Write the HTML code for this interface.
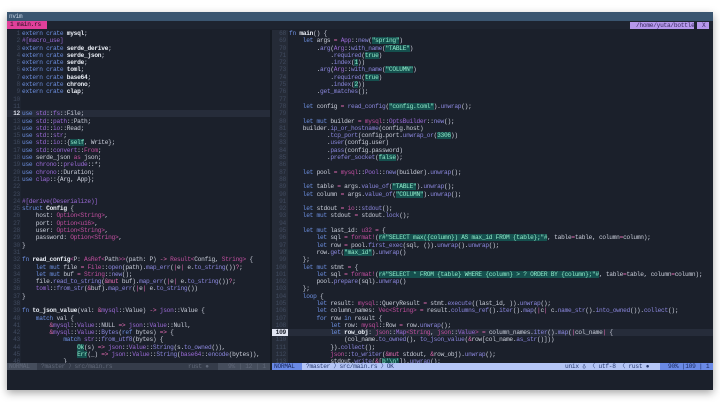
<!DOCTYPE html>
<html><head><meta charset="utf-8"><style>
*{margin:0;padding:0;box-sizing:border-box}
html,body{width:720px;height:402px;background:#fff;overflow:hidden}
#win{position:absolute;left:7px;top:12px;width:706px;height:378px;background:#1b202b;box-shadow:0 3px 8px rgba(0,0,0,.35);overflow:hidden}
#title{position:absolute;left:0;top:0;width:706px;height:9px;background:#3a5570;color:#c8d4e4;font:6px "Liberation Mono",monospace;line-height:9px;padding-left:2px}
#tabs{position:absolute;left:0;top:9px;width:706px;height:8px;background:#1e2430}
.m{font-family:"Liberation Mono",monospace;font-size:6.2px;letter-spacing:-0.27px;white-space:pre;line-height:7.29px}
#tab1{position:absolute;left:0;top:0;height:8px;width:40px;background:#e0409a;color:#2a1020;line-height:8px;padding-left:3px}
#cwd{position:absolute;left:623px;top:1px;height:7px;width:64px;background:#b698ec;color:#3a2a60;line-height:7px;padding-left:6px}
#cx{position:absolute;left:690px;top:1px;height:7px;width:12px;background:#b698ec;color:#3a2a60;line-height:7px;padding-left:5px}
.pane{position:absolute;top:18px}
#lg{left:0;width:14px;height:333px;background:#1e2430}
#sep{position:absolute;left:263px;top:18px;width:2px;height:333px;background:#151a22}
#rg{left:265px;width:16px;height:333px;background:#252b37}
.ln{position:absolute;top:18px;color:#404a5e;text-align:right}
.code{position:absolute;top:18px;color:#c8ccd8;overflow:hidden;height:333px}
.k{color:#6d8fe0}.t{color:#c04e9e}.n{color:#9a6ad6}.b{color:#e8ecf4;font-weight:bold}.s{background:#15504e;color:#8fe8c8}.f{color:#8a86dc}.o{color:#e06ab0}
#st1{position:absolute;left:0;top:351px;width:263px;height:7px;background:#353c4a;color:#606878;line-height:7px;overflow:hidden}
#st2{position:absolute;left:265px;top:351px;width:441px;height:7px;background:#b5c6f6;color:#283a70;line-height:7px;overflow:hidden}
.nm1{position:absolute;left:0;top:0;width:30px;height:7px;background:#454d5c;padding-left:2px}
.nm2{position:absolute;left:0;top:0;width:30px;height:7px;background:#6a8ae6;padding-left:2px;color:#1a2a60}
</style></head><body>
<div id="win">
<div id="title" class="m">nvim</div>
<div id="tabs"><div id="tab1" class="m">1 main.rs</div><div id="cwd" class="m">/home/yuta/bottle</div><div id="cx" class="m">X</div></div>
<div id="lg" class="pane"></div>
<div style="position:absolute;left:0;top:98.2px;width:263px;height:7.3px;background:#262c3a"></div>
<div id="sep"></div>
<div id="rg" class="pane"></div>
<div style="position:absolute;left:265px;top:316.9px;width:16px;height:7.3px;background:#e0e4f0"></div>
<div style="position:absolute;left:281px;top:316.9px;width:425px;height:7.3px;background:#262c3a"></div>
<div class="ln m" style="left:0;width:13px">1
2
3
4
5
6
7
8
9
10
11
<span style="color:#d8dce8;font-weight:bold">12</span>
13
14
15
16
17
18
19
20
21
22
23
24
25
26
27
28
29
30
31
32
33
34
35
36
37
38
39
40
41
42
43
44
45
46</div>
<div class="code m" style="left:15px;width:248px"><span class="k">extern crate</span> <span class="b">mysql</span>;
<span class="n">#[macro_use]</span>
<span class="k">extern crate</span> <span class="b">serde_derive</span>;
<span class="k">extern crate</span> <span class="b">serde_json</span>;
<span class="k">extern crate</span> <span class="b">serde</span>;
<span class="k">extern crate</span> <span class="b">toml</span>;
<span class="k">extern crate</span> <span class="b">base64</span>;
<span class="k">extern crate</span> <span class="b">chrono</span>;
<span class="k">extern crate</span> <span class="b">clap</span>;


<span class="k">use</span> <span class="n">std</span>::<span class="n">fs</span>::File;
<span class="k">use</span> <span class="n">std</span>::<span class="n">path</span>::Path;
<span class="k">use</span> <span class="n">std</span>::<span class="n">io</span>::Read;
<span class="k">use</span> <span class="n">std</span>::<span class="n">str</span>;
<span class="k">use</span> <span class="n">std</span>::<span class="n">io</span>::{<span class="s">self</span>, Write};
<span class="k">use</span> <span class="n">std</span>::<span class="n">convert</span>::<span class="t">From</span>;
<span class="k">use</span> serde_json <span class="t">as</span> json;
<span class="k">use</span> <span class="n">chrono</span>::<span class="n">prelude</span>::*;
<span class="k">use</span> <span class="n">chrono</span>::Duration;
<span class="k">use</span> <span class="n">clap</span>::{Arg, App};


<span class="n">#[derive(Deserialize)]</span>
<span class="k">struct</span> <span class="b">Config</span> {
    host: <span class="t">Option&lt;String&gt;</span>,
    port: <span class="t">Option&lt;u16&gt;</span>,
    user: <span class="t">Option&lt;String&gt;</span>,
    password: <span class="t">Option&lt;String&gt;</span>,
}

<span class="k">fn</span> <span class="b">read_config</span><span class="t">&lt;</span>P: <span class="t">AsRef&lt;</span>Path<span class="t">&gt;&gt;</span>(path: P) <span class="o">-&gt;</span> <span class="t">Result&lt;</span>Config, <span class="t">String&gt;</span> {
    <span class="k">let mut</span> file <span class="o">=</span> <span class="t">File</span>::<span class="f">open</span>(path).<span class="f">map_err</span>(<span class="o">|</span>e<span class="o">|</span> e.<span class="f">to_string</span>())<span class="o">?</span>;
    <span class="k">let mut</span> buf <span class="o">=</span> <span class="t">String</span>::<span class="f">new</span>();
    file.<span class="f">read_to_string</span>(<span class="o">&amp;mut</span> buf).<span class="f">map_err</span>(<span class="o">|</span>e<span class="o">|</span> e.<span class="f">to_string</span>())<span class="o">?</span>;
    <span class="n">toml</span>::<span class="f">from_str</span>(<span class="o">&amp;</span>buf).<span class="f">map_err</span>(<span class="o">|</span>e<span class="o">|</span> e.<span class="f">to_string</span>())
}

<span class="k">fn</span> <span class="b">to_json_value</span>(val: <span class="o">&amp;</span><span class="n">mysql</span>::Value) <span class="o">-&gt;</span> <span class="n">json</span>::Value {
    <span class="k">match</span> val {
        <span class="o">&amp;</span><span class="n">mysql</span>::<span class="n">Value</span>::NULL <span class="o">=&gt;</span> <span class="n">json</span>::<span class="n">Value</span>::Null,
        <span class="o">&amp;</span><span class="n">mysql</span>::<span class="n">Value</span>::<span class="f">Bytes</span>(<span class="k">ref</span> bytes) <span class="o">=&gt;</span> {
            <span class="k">match</span> <span class="n">str</span>::<span class="f">from_utf8</span>(bytes) {
                <span class="s">Ok</span>(s) <span class="o">=&gt;</span> <span class="n">json</span>::<span class="n">Value</span>::<span class="f">String</span>(s.<span class="f">to_owned</span>()),
                <span class="s">Err</span>(_) <span class="o">=&gt;</span> <span class="n">json</span>::<span class="n">Value</span>::<span class="f">String</span>(<span class="n">base64</span>::<span class="f">encode</span>(bytes)),
            }</div>
<div class="ln m" style="left:265px;width:14px">68
69
70
71
72
73
74
75
76
77
78
79
80
81
82
83
84
85
86
87
88
89
90
91
92
93
94
95
96
97
98
99
100
101
102
103
104
105
106
107
108
<span style="color:#1b202b;font-weight:bold">109</span>
110
111
112
113</div>
<div class="code m" style="left:282px;width:424px"><span class="k">fn</span> <span class="b">main</span>() {
    <span class="k">let</span> args <span class="o">=</span> <span class="n">App</span>::<span class="f">new</span>(<span class="s">"spring"</span>)
        .<span class="f">arg</span>(<span class="n">Arg</span>::<span class="f">with_name</span>(<span class="s">"TABLE"</span>)
            .<span class="f">required</span>(<span class="s">true</span>)
            .<span class="f">index</span>(<span class="s">1</span>))
        .<span class="f">arg</span>(<span class="n">Arg</span>::<span class="f">with_name</span>(<span class="s">"COLUMN"</span>)
            .<span class="f">required</span>(<span class="s">true</span>)
            .<span class="f">index</span>(<span class="s">2</span>))
        .<span class="f">get_matches</span>();

    <span class="k">let</span> config <span class="o">=</span> <span class="f">read_config</span>(<span class="s">"config.toml"</span>).<span class="f">unwrap</span>();

    <span class="k">let mut</span> builder <span class="o">=</span> <span class="t">mysql</span>::<span class="n">OptsBuilder</span>::<span class="f">new</span>();
    builder.<span class="f">ip_or_hostname</span>(config.host)
           .<span class="f">tcp_port</span>(config.port.<span class="f">unwrap_or</span>(<span class="s">3306</span>))
           .<span class="f">user</span>(config.user)
           .<span class="f">pass</span>(config.password)
           .<span class="f">prefer_socket</span>(<span class="s">false</span>);

    <span class="k">let</span> pool <span class="o">=</span> <span class="t">mysql</span>::<span class="n">Pool</span>::<span class="f">new</span>(builder).<span class="f">unwrap</span>();

    <span class="k">let</span> table <span class="o">=</span> args.<span class="f">value_of</span>(<span class="s">"TABLE"</span>).<span class="f">unwrap</span>();
    <span class="k">let</span> column <span class="o">=</span> args.<span class="f">value_of</span>(<span class="s">"COLUMN"</span>).<span class="f">unwrap</span>();

    <span class="k">let</span> stdout <span class="o">=</span> <span class="t">io</span>::<span class="f">stdout</span>();
    <span class="k">let mut</span> stdout <span class="o">=</span> stdout.<span class="f">lock</span>();

    <span class="k">let mut</span> last_id: <span class="t">u32</span> <span class="o">=</span> {
        <span class="k">let</span> sql <span class="o">=</span> <span class="t">format!</span>(<span class="s">r#"SELECT max({column}) AS max_id FROM {table};"#</span>, table<span class="o">=</span>table, column<span class="o">=</span>column);
        <span class="k">let</span> row <span class="o">=</span> pool.<span class="f">first_exec</span>(sql, ()).<span class="f">unwrap</span>().<span class="f">unwrap</span>();
        row.<span class="f">get</span>(<span class="s">"max_id"</span>).<span class="f">unwrap</span>()
    };
    <span class="k">let mut</span> stmt <span class="o">=</span> {
        <span class="k">let</span> sql <span class="o">=</span> <span class="t">format!</span>(<span class="s">r#"SELECT * FROM {table} WHERE {column} &gt; ? ORDER BY {column};"#</span>, table<span class="o">=</span>table, column<span class="o">=</span>column);
        pool.<span class="f">prepare</span>(sql).<span class="f">unwrap</span>()
    };
    <span class="k">loop</span> {
        <span class="k">let</span> result: <span class="t">mysql</span>::QueryResult <span class="o">=</span> stmt.<span class="f">execute</span>((last_id, )).<span class="f">unwrap</span>();
        <span class="k">let</span> column_names: <span class="t">Vec&lt;String&gt;</span> <span class="o">=</span> result.<span class="f">columns_ref</span>().<span class="f">iter</span>().<span class="f">map</span>(<span class="o">|</span>c<span class="o">|</span> c.<span class="f">name_str</span>().<span class="f">into_owned</span>()).<span class="f">collect</span>();
        <span class="k">for</span> row <span class="k">in</span> result {
            <span class="k">let</span> row: <span class="t">mysql</span>::Row <span class="o">=</span> row.<span class="f">unwrap</span>();
            <span class="k">let</span> <span class="b">row_obj</span>: <span class="t">json</span>::<span class="n">Map</span><span class="t">&lt;String</span>, <span class="t">json</span>::<span class="n">Value</span><span class="t">&gt;</span> <span class="o">=</span> column_names.<span class="f">iter</span>().<span class="f">map</span>(<span class="o">|</span>col_name<span class="o">|</span> {
                (col_name.<span class="f">to_owned</span>(), <span class="f">to_json_value</span>(<span class="o">&amp;</span>row[col_name.<span class="f">as_str</span>()]))
            }).<span class="f">collect</span>();
            <span class="t">json</span>::<span class="f">to_writer</span>(<span class="o">&amp;mut</span> stdout, <span class="o">&amp;</span>row_obj).<span class="f">unwrap</span>();
            stdout.<span class="f">write</span>(<span class="o">&amp;</span>[<span class="s">b'\n'</span>]).<span class="f">unwrap</span>();</div>
<div id="st1" class="m"><span class="nm1">NORMAL</span><span style="position:absolute;left:34px">?master 〉src/main.rs</span><span style="position:absolute;left:181px">rust ●</span><span style="position:absolute;left:211px;top:0;width:52px;height:7px;background:#454d5c;padding-left:10px">9% | 12 | 1</span></div>
<div id="st2" class="m"><span class="nm2">NORMAL</span><span style="position:absolute;left:34px">?master 〉src/main.rs 〉OK</span><span style="position:absolute;left:293px">unix ♁ 〈 utf-8 〈 rust ●</span><span style="position:absolute;left:388px;top:0;width:53px;height:7px;background:#6a8ae6;padding-left:8px;color:#1a2a60">90% |109 | 1</span></div>
</div>
</body></html>
